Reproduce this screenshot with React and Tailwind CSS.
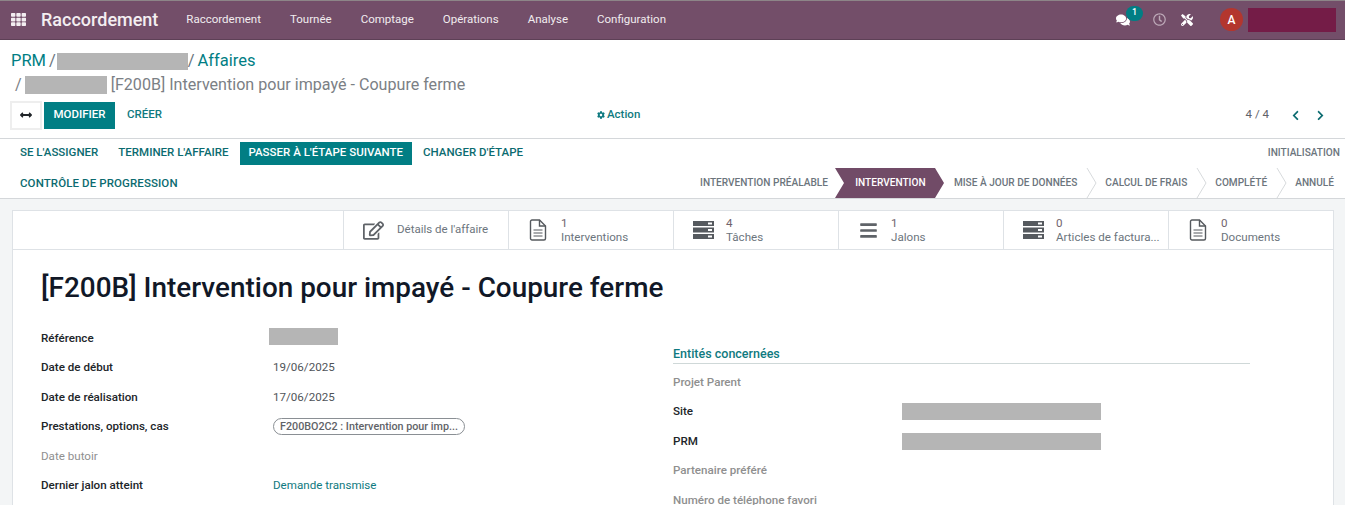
import React from "react";
import {
  FaTh,
  FaComments,
  FaRegClock,
  FaTools,
  FaCog,
  FaChevronLeft,
  FaChevronRight,
  FaArrowsAltH,
  FaRegEdit,
  FaBars,
} from "react-icons/fa";

const MENU = ["Raccordement", "Tournée", "Comptage", "Opérations", "Analyse", "Configuration"];

function TasksIcon() {
  return (
    <svg className="ml-[-1px]" width="21" height="18" viewBox="0 0 21 18">
      <path
        fill="#55595e"
        fillRule="evenodd"
        d="M0 0h21v5H0zM15 1.5v2h4v-2zM0 6.5h21v5H0zM15 8v2h4V8zM0 13h21v5H0zM15 14.5v2h4v-2z"
      />
    </svg>
  );
}

function FileIcon() {
  return (
    <svg width="18" height="22" viewBox="0 0 18 22" fill="none" stroke="#55595e" strokeWidth="1.4">
      <path d="M1.5 2.5a1.5 1.5 0 0 1 1.5-1.5h7.5l6 6v12.5a1.5 1.5 0 0 1-1.5 1.5H3a1.5 1.5 0 0 1-1.5-1.5z" />
      <path d="M10.5 1v6h6" />
      <path d="M4.5 11h9M4.5 14h9M4.5 17h9" strokeWidth="1.2" />
    </svg>
  );
}

function StatButton({ icon, count, label }) {
  return (
    <div className="w-[165px] h-full flex items-center border-l border-[#dee2e6] pl-[20px] whitespace-nowrap">
      <div className="w-[32px] flex items-center text-[#5f6368]">{icon}</div>
      {count !== undefined ? (
        <div className="text-[11.6px] leading-[13.5px] text-[#6c757d] pt-[1px]">
          <div className="text-[#71636d]">{count}</div>
          <div>{label}</div>
        </div>
      ) : (
        <div className="text-[11.5px] text-[#6c757d] ml-[1px]">{label}</div>
      )}
    </div>
  );
}

function Step({ label, active, arrow = true }) {
  if (active) {
    return (
      <div className="relative h-[30px] w-[109px] flex items-center justify-center text-white">
        <svg className="absolute inset-0" width="109" height="30" viewBox="0 0 109 30">
          <path d="M0 0H100L109 15L100 30H0L9 15Z" fill="#714b67" />
        </svg>
        <span className="relative pl-[2px]">{label}</span>
      </div>
    );
  }
  return (
    <div className="flex items-center h-[30px]">
      <span>{label}</span>
      {arrow && (
        <svg className="mx-[8.5px]" width="11" height="30" viewBox="0 0 11 30">
          <path d="M1 0L10 15L1 30" fill="none" stroke="#d7dadd" strokeWidth="1" />
        </svg>
      )}
    </div>
  );
}

function Field({ label, muted, children }) {
  return (
    <div className="flex items-center h-[29.5px] text-[11.6px]">
      <div className={`w-[232px] ${muted ? "text-[#8f8f8f]" : "text-[#212529] font-medium"}`}>{label}</div>
      <div className="flex-1 flex items-center">{children}</div>
    </div>
  );
}

function RightField({ label, muted, children }) {
  return (
    <div className="flex items-center h-[29.5px] text-[11.6px]">
      <div className={`w-[229px] font-medium ${muted ? "text-[#8f8f8f]" : "text-[#212529]"}`}>{label}</div>
      {children}
    </div>
  );
}

export default function App() {
  return (
    <div className="h-[505px] overflow-hidden bg-[#f3f5f6] font-['Roboto',sans-serif] flex flex-col">
      <header className="h-[40px] shrink-0 bg-[#734e69] border-t border-[#8d8588] border-b-[#5d4056] border-b pb-[1px] flex items-center text-white">
        <FaTh className="ml-[11px] text-[15px] text-[#f3eef1]" />
        <span className="ml-[15px] text-[18px] font-medium text-[#f3eef1]">Raccordement</span>
        <nav className="ml-[28px] flex gap-[29px] text-[11.5px] text-[#f1ecef]">
          {MENU.map((item) => (
            <span key={item}>{item}</span>
          ))}
        </nav>
        <div className="ml-auto flex items-center">
          <div className="relative mr-[23px]">
            <FaComments className="text-[14px]" />
            <span className="absolute left-[10px] top-[-7px] w-[17px] h-[15px] rounded-full bg-[#017e84] text-[9px] font-medium flex items-center justify-center">1</span>
          </div>
          <FaRegClock className="text-[13px] text-[#bda9b8] mr-[15px]" />
          <FaTools className="text-[12px] mr-[27px]" />
          <div className="w-[23px] h-[23px] rounded-full bg-[#b3362e] text-[12px] font-medium flex items-center justify-center">A</div>
          <div className="w-[88px] h-[24px] bg-[#741c47] ml-[5px] mr-[9px]" />
        </div>
      </header>

      <div className="bg-white h-[99px] shrink-0 border-b border-[#d4d7da] pl-[11px] pr-[19px]">
        <div className="h-[33px] pt-[9px] flex items-center text-[16.5px] text-[#017e84] leading-none">
          <span>PRM</span>
          <span className="text-[#6c757d] ml-[3px]">/</span>
          <span className="w-[131px] h-[17px] bg-[#b5b5b5] ml-[1px]" />
          <span className="text-[#6c757d]">/</span>
          <span className="ml-[3px]">Affaires</span>
        </div>
        <div className="h-[24px] flex items-center text-[16.1px] text-[#7b8085] pl-[4px]">
          <span>/</span>
          <span className="w-[82px] h-[18px] bg-[#b5b5b5] ml-[3px] mr-[4px]" />
          <span>[F200B] Intervention pour impayé - Coupure ferme</span>
        </div>
        <div className="h-[30px] mt-[3px] flex items-center text-[11.5px] font-medium">
          <div className="w-[32px] h-[29px] ml-[-1px] border-2 border-[#eeeeee] flex items-center justify-center text-[#212529] text-[12px]">
            <FaArrowsAltH />
          </div>
          <div className="w-[71px] h-[27px] ml-[2px] bg-[#017e84] text-white flex items-center justify-center">MODIFIER</div>
          <div className="ml-[12px] text-[#0f7a80]">CRÉER</div>
          <div className="ml-[435px] flex items-center gap-[2px] text-[#0f7a80]">
            <FaCog className="text-[8px]" />
            <span>Action</span>
          </div>
          <div className="ml-auto text-[11.5px] font-normal text-[#5f6368]">4 / 4</div>
          <FaChevronLeft className="ml-[21px] text-[#0b6b70] text-[11px]" />
          <FaChevronRight className="ml-[14px] text-[#0b6b70] text-[11px]" />
        </div>
      </div>

      <div className="bg-white h-[60px] shrink-0 border-b border-[#d4d7da] flex justify-between pl-[20px] pr-[11px]">
        <div className="font-medium text-[#0b6b70] text-[11.5px]">
          <div className="h-[28px] flex items-center">
            <span>SE L'ASSIGNER</span>
            <span className="ml-[20px]">TERMINER L'AFFAIRE</span>
            <span className="ml-[11px] px-[9px] h-[23px] bg-[#017e84] text-white flex items-center">PASSER À L'ÉTAPE SUIVANTE</span>
            <span className="ml-[11px]">CHANGER D'ÉTAPE</span>
          </div>
          <div className="h-[31px] pt-[2px] flex items-center tracking-[0.1px]">CONTRÔLE DE PROGRESSION</div>
        </div>
        <div className="flex flex-col items-end text-[10.1px] font-medium text-[#6c757d]">
          <div className="h-[28px] flex items-center mr-[-6px]">INITIALISATION</div>
          <div className="flex items-center mt-[1px]">
            <Step label="INTERVENTION PRÉALABLE" arrow={false} />
            <div className="w-[7px]" />
            <Step label="INTERVENTION" active />
            <div className="w-[10px]" />
            <Step label="MISE À JOUR DE DONNÉES" />
            <Step label="CALCUL DE FRAIS" />
            <Step label="COMPLÉTÉ" />
            <Step label="ANNULÉ" arrow={false} />
          </div>
        </div>
      </div>

      <main className="flex-1 mt-[11px] ml-[12px] mr-[11px] bg-white border border-[#dee2e6] border-b-0 min-h-0">
        <div className="h-[39px] border-b border-[#dee2e6] flex justify-end">
          <StatButton icon={<FaRegEdit className="text-[21px] ml-[-1px]" />} label="Détails de l'affaire" />
          <StatButton icon={<FileIcon />} count="1" label="Interventions" />
          <StatButton icon={<TasksIcon />} count="4" label="Tâches" />
          <StatButton icon={<FaBars className="text-[19px]" />} count="1" label="Jalons" />
          <StatButton icon={<TasksIcon />} count="0" label="Articles de factura..." />
          <StatButton icon={<FileIcon />} count="0" label="Documents" />
        </div>

        <div className="pl-[28px]">
          <h1 className="pt-[19px] h-[73.5px] text-[27.9px] leading-[38px] font-medium text-[#111827]">
            [F200B] Intervention pour impayé - Coupure ferme
          </h1>
          <div className="flex">
            <div className="w-[632px]">
              <Field label="Référence">
                <div className="w-[69px] h-[17px] bg-[#b5b5b5] mb-[4px] ml-[-4px]" />
              </Field>
              <Field label="Date de début"><span className="text-[#4f5459]">19/06/2025</span></Field>
              <Field label="Date de réalisation"><span className="text-[#4f5459]">17/06/2025</span></Field>
              <Field label="Prestations, options, cas">
                <span className="border border-[#8a8f94] rounded-full h-[17px] px-[6px] flex items-center text-[10.75px] font-medium text-[#5f6368]">F200BO2C2 : Intervention pour imp...</span>
              </Field>
              <Field label="Date butoir" muted />
              <Field label="Dernier jalon atteint"><span className="text-[#0f7a80]">Demande transmise</span></Field>
            </div>
            <div className="w-[577px] pt-[23.5px]">
              <div className="h-[17px] border-b border-[#cfd8d8] text-[12.5px] leading-[14px] font-medium text-[#0f7a80]">Entités concernées</div>
              <div className="pt-[3.5px]">
                <RightField label="Projet Parent" muted />
                <RightField label="Site"><div className="w-[199px] h-[17px] bg-[#b5b5b5]" /></RightField>
                <RightField label="PRM"><div className="w-[199px] h-[17px] bg-[#b5b5b5]" /></RightField>
                <RightField label="Partenaire préféré" muted />
                <RightField label="Numéro de téléphone favori" muted />
              </div>
            </div>
          </div>
        </div>
      </main>
    </div>
  );
}
